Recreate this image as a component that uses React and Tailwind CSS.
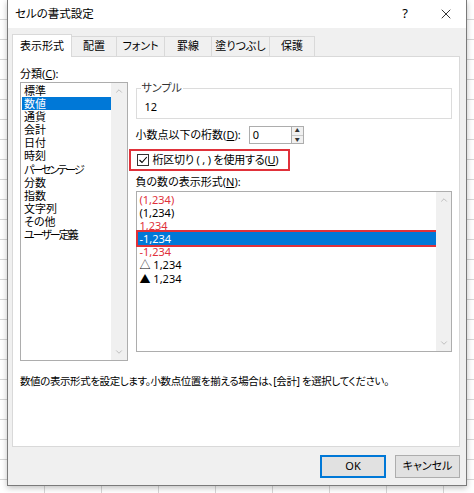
import React from "react";
import { X, ChevronUp, ChevronDown } from "lucide-react";

const font = { fontFamily: '"Noto Sans", "Noto Sans CJK JP", sans-serif' };

function Tab({ label, w, selected }) {
  if (selected) {
    return (
      <div
        className={`${w} h-[23px] bg-white border border-[#d9d9d9] border-b-0 flex items-center justify-center whitespace-nowrap text-black relative z-10 -mb-px`}
      >
        {label}
      </div>
    );
  }
  return (
    <div
      className={`${w} h-[20px] border border-[#d9d9d9] border-b-0 border-l-0 flex items-center justify-center whitespace-nowrap text-black`}
    >
      {label}
    </div>
  );
}

export default function App() {
  const cats = [
    { t: "標準" },
    { t: "数値", sel: true },
    { t: "通貨" },
    { t: "会計" },
    { t: "日付" },
    { t: "時刻" },
    { t: "パーセンテージ", kana: true },
    { t: "分数" },
    { t: "指数" },
    { t: "文字列" },
    { t: "その他" },
    { t: "ユーザー定義", kana: true },
  ];
  const negs = [
    { t: "(1,234)", red: true },
    { t: "(1,234)" },
    { t: "1,234", red: true },
    { t: "-1,234", sel: true },
    { t: "-1,234", red: true },
    { t: "△ 1,234" },
    { t: "▲ 1,234" },
  ];
  return (
    <div
      className="w-[474px] h-[493px] overflow-hidden bg-white text-[11px] [font-feature-settings:'palt'] bg-[repeating-linear-gradient(to_bottom,transparent_0px,transparent_19px,#d6d6d6_19px,#d6d6d6_20px),repeating-linear-gradient(to_right,transparent_0px,transparent_44px,#d6d6d6_44px,#d6d6d6_45px,transparent_45px,transparent_57px)]"
      style={font}
    >
      <div className="ml-[7px] w-[460px] h-[486px] border border-t-0 border-[#7a7a7a] bg-[#f0f0f0] flex flex-col shadow-[0_2px_6px_rgba(0,0,0,0.25)]">
        {/* title bar */}
        <div className="h-[28px] bg-white flex items-center pl-[7px] pr-[12px] text-[11.5px] text-black">
          <span>セルの書式設定</span>
          <span className="ml-auto mr-[30px] text-[13px]">?</span>
          <X size={16} strokeWidth={1.2} />
        </div>
        {/* tabs */}
        <div className="mt-[5px] ml-[4px] flex items-end h-[23px]">
          <Tab label="表示形式" w="w-[60px]" selected />
          <Tab label="配置" w="w-[45px]" />
          <Tab label="フォント" w="w-[48px]" />
          <Tab label="罫線" w="w-[47px]" />
          <Tab label="塗りつぶし" w="w-[58px]" />
          <Tab label="保護" w="w-[45px]" />
        </div>
        {/* panel */}
        <div className="ml-[4px] w-[448px] h-[391px] bg-white border border-[#d9d9d9] flex flex-col px-[7px] pt-[8px] text-black">
          <div className="flex">
            {/* left */}
            <div className="w-[108px] flex flex-col">
              <div className="h-[17px] leading-[17px] whitespace-nowrap">
                分類(<span className="underline">C</span>):
              </div>
              <div className="h-[279px] border border-[#adadad] flex">
                <div className="flex-1 pt-px pl-px">
                  {cats.map((c) => (
                    <div
                      key={c.t}
                      className={`h-[13.1px] leading-[13px] pl-[2px] whitespace-nowrap ${c.kana ? "tracking-[-2px]" : ""} ${c.sel ? "bg-[#0078d7] text-white" : ""}`}
                    >
                      {c.t}
                    </div>
                  ))}
                </div>
                <div className="w-[16px] bg-[#f0f0f0] flex flex-col items-center justify-between py-[3px] text-[#a0a0a0]">
                  <ChevronUp size={10} strokeWidth={1.5} />
                  <ChevronDown size={10} strokeWidth={1.5} />
                </div>
              </div>
            </div>
            {/* right */}
            <div className="ml-[8px] w-[318px] flex flex-col">
              <div className="mt-[23px] h-[31px] border border-[#dcdcdc] relative">
                <span className="absolute -top-[8px] left-[4px] bg-white px-px leading-[14px] text-[#333] whitespace-nowrap">サンプル</span>
                <div className="pl-[8px] pt-[11px] leading-[14px]">12</div>
              </div>
              <div className="mt-[7px] h-[18px] flex items-center">
                <span className="whitespace-nowrap">
                  小数点以下の桁数(<span className="underline">D</span>):
                </span>
                <div className="ml-[8px] w-[55px] h-[18px] border border-[#adadad] flex items-stretch">
                  <span className="flex-1 pl-[3px] leading-[16px]">0</span>
                  <div className="w-[12px] border-l border-[#adadad] flex flex-col bg-[#f0f0f0]">
                    <div className="flex-1 flex items-center justify-center border-b border-[#c8c8c8] text-[5px] leading-none text-[#333]">▲</div>
                    <div className="flex-1 flex items-center justify-center text-[5px] leading-none text-[#333]">▼</div>
                  </div>
                </div>
              </div>
              <div className="mt-[5px] -ml-[7px] w-[161px] h-[22px] border-2 border-[#e0313a] flex items-center pl-[6px]">
                <div className="w-[12px] h-[12px] border border-[#333] flex items-center justify-center shrink-0">
                  <svg width="10" height="10" viewBox="0 0 10 10">
                    <path d="M1.5 5 L4 7.5 L8.8 2" fill="none" stroke="#000" strokeWidth="1.1" />
                  </svg>
                </div>
                <span className="ml-[4px] whitespace-nowrap tracking-[-0.2px]">
                  桁区切り ( , ) を使用する(<span className="underline">U</span>)
                </span>
              </div>
              <div className="mt-[4px] h-[14px] leading-[14px] whitespace-nowrap">
                負の数の表示形式(<span className="underline">N</span>):
              </div>
              <div className="mt-[2px] h-[161px] border border-[#adadad] flex">
                <div className="flex-1 pt-px pl-px">
                  {negs.map((n, i) => (
                    <div
                      key={i}
                      className={`h-[13.1px] leading-[13px] pl-[2px] whitespace-nowrap ${n.sel ? "bg-[#0078d7] text-white outline-2 outline-[#e0313a]" : n.red ? "text-[#e0313a]" : ""}`}
                    >
                      {n.t}
                    </div>
                  ))}
                </div>
                <div className="w-[15px] bg-[#f0f0f0] flex flex-col items-center justify-between py-[3px] text-[#a0a0a0]">
                  <ChevronUp size={10} strokeWidth={1.5} />
                  <ChevronDown size={10} strokeWidth={1.5} />
                </div>
              </div>
            </div>
          </div>
          <div className="mt-[13px] h-[14px] leading-[14px] text-[10.5px] tracking-[-0.4px] whitespace-nowrap">
            数値の表示形式を設定します。小数点位置を揃える場合は、[会計] を選択してください。
          </div>
        </div>
        {/* buttons */}
        <div className="mt-[8px] flex justify-end gap-[9px] pr-[6px]">
          <div className="w-[66px] h-[23px] border-2 border-[#0078d7] bg-[#e1e1e1] flex items-center justify-center">OK</div>
          <div className="w-[65px] h-[23px] border border-[#adadad] bg-[#e1e1e1] flex items-center justify-center whitespace-nowrap">キャンセル</div>
        </div>
      </div>
    </div>
  );
}
